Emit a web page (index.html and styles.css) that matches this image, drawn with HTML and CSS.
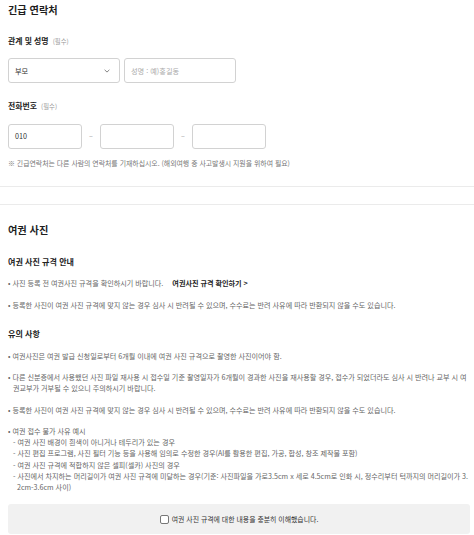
FILE: index.html
```html
<!DOCTYPE html>
<html lang="ko">
<head>
<meta charset="utf-8">
<title>긴급 연락처 / 여권 사진</title>
<link rel="stylesheet" href="styles.css">
</head>
<body>
<section class="emergency">
  <h2 class="title">긴급 연락처</h2>
  <div class="label">관계 및 성명 <span class="req">(필수)</span></div>
  <div class="field-row">
    <div class="box select">
      <span>부모</span>
      <svg class="chev" width="6" height="4" viewBox="0 0 6 4"><path d="M0.6 0.8 L3 3.1 L5.4 0.8" fill="none" stroke="#666" stroke-width="0.8"/></svg>
    </div>
    <div class="box name"><span class="ph">성명 : 예)홍길동</span></div>
  </div>
  <div class="label label-phone">전화번호 <span class="req">(필수)</span></div>
  <div class="phone-row">
    <div class="box phone">010</div>
    <span class="dash">–</span>
    <div class="box phone"></div>
    <span class="dash">–</span>
    <div class="box phone"></div>
  </div>
  <p class="note">※ 긴급연락처는 다른 사람의 연락처를 기재하십시오. (해외여행 중 사고발생시 지원을 위하여 필요)</p>
</section>

<section class="passport">
  <h2 class="title">여권 사진</h2>
  <h3 class="sub-title">여권 사진 규격 안내</h3>
  <ul class="bullets">
    <li>• 사진 등록 전 여권사진 규격을 확인하시기 바랍니다.<a class="link">여권사진 규격 확인하기 &gt;</a></li>
    <li>• 등록한 사진이 여권 사진 규격에 맞지 않는 경우 심사 시 반려될 수 있으며, 수수료는 반려 사유에 따라 반환되지 않을 수도 있습니다.</li>
  </ul>
  <h3 class="sub-title sub-notice">유의 사항</h3>
  <ul class="bullets">
    <li>• 여권사진은 여권 발급 신청일로부터 6개월 이내에 여권 사진 규격으로 촬영한 사진이어야 함.</li>
    <li>• 다른 신분증에서 사용했던 사진 파일 재사용 시 접수일 기준 촬영일자가 6개월이 경과한 사진을 재사용할 경우, 접수가 되었더라도 심사 시 반려나 교부 시 여권교부가 거부될 수 있으니 주의하시기 바랍니다.</li>
    <li>• 등록한 사진이 여권 사진 규격에 맞지 않는 경우 심사 시 반려될 수 있으며, 수수료는 반려 사유에 따라 반환되지 않을 수도 있습니다.</li>
    <li>• 여권 접수 불가 사유 예시
      <ul class="subs">
        <li>- 여권 사진 배경이 흰색이 아니거나 테두리가 있는 경우</li>
        <li>- 사진 편집 프로그램, 사진 필터 기능 등을 사용해 임의로 수정한 경우(AI를 활용한 편집, 가공, 합성, 창조 제작물 포함)</li>
        <li>- 여권 사진 규격에 적합하지 않은 셀피(셀카) 사진의 경우</li>
        <li>- 사진에서 차지하는 머리길이가 여권 사진 규격에 미달하는 경우(기준: 사진파일을 가로3.5cm x 세로 4.5cm로 인화 시, 정수리부터 턱까지의 머리길이가 3.2cm-3.6cm 사이)</li>
      </ul>
    </li>
  </ul>
  <label class="agree">
    <span class="check"></span>
    <span>여권 사진 규격에 대한 내용을 충분히 이해했습니다.</span>
  </label>
</section>
</body>
</html>
```

FILE: styles.css
```css
html, body {
  margin: 0;
  padding: 0;
  background: #fff;
}

body {
  font-family: "Noto Sans CJK KR", "Noto Sans", sans-serif;
  color: #222;
  width: 474px;
}

.emergency {
  padding: 0 4px 17px 8px;
  border-bottom: 1px solid #ebebeb;
  margin-bottom: 17px;
}

.passport {
  border-top: 1px solid #ebebeb;
  padding: 15px 4px 0 8px;
}

.title {
  margin: 0;
  font-size: 10.2px;
  font-weight: 700;
  line-height: 20px;
  color: #1e1e1e;
}

.label {
  margin: 15px 0 10px;
  font-size: 7.85px;
  font-weight: 700;
  line-height: 12px;
  color: #222;
}

.label-phone {
  margin-top: 17px;
  margin-bottom: 10.5px;
}

.req {
  font-size: 6.35px;
  font-weight: 400;
  color: #999;
  margin-left: 2px;
}

.field-row {
  display: flex;
  gap: 4px;
}

.box {
  box-sizing: border-box;
  height: 25px;
  border: 1px solid #d2d2d2;
  border-radius: 3px;
  background: #fff;
  display: flex;
  align-items: center;
  padding: 0 6px;
  font-size: 7.2px;
  color: #333;
}

.select {
  width: 112px;
  justify-content: space-between;
  padding-right: 9px;
}

.name {
  width: 112px;
}

.ph {
  color: #aaa;
}

.phone-row {
  display: flex;
  align-items: center;
}

.phone {
  width: 74px;
}

.dash {
  width: 18px;
  text-align: center;
  font-size: 7.2px;
  color: #999;
}

.note {
  margin: 9.5px 0 0;
  font-size: 6.9px;
  line-height: 11px;
  color: #777;
}

.sub-title {
  margin: 15.5px 0 0;
  font-size: 8.05px;
  font-weight: 700;
  line-height: 12px;
  color: #222;
}

.sub-notice {
  margin-top: 17.5px;
}

.bullets {
  list-style: none;
  margin: 10.5px 0 0;
  padding: 0;
}

.bullets > li {
  font-size: 7.1px;
  line-height: 11px;
  color: #666;
  padding-left: 5px;
  text-indent: -5px;
  word-break: break-all;
}

.bullets > li + li {
  margin-top: 10.5px;
}

.link {
  margin-left: 9px;
  font-weight: 700;
  color: #222;
}

.subs {
  list-style: none;
  margin: 0;
  padding: 0;
}

.subs > li {
  line-height: 11.3px;
  padding-left: 4px;
  text-indent: -4px;
}

.agree {
  margin-top: 11px;
  height: 30px;
  border-radius: 3px;
  background: #f1f1f1;
  display: flex;
  align-items: center;
  justify-content: center;
  font-size: 6.9px;
  color: #333;
}

.check {
  box-sizing: border-box;
  width: 9px;
  height: 9px;
  border: 1px solid #777;
  border-radius: 2px;
  background: #fff;
  margin-right: 3px;
}
```
